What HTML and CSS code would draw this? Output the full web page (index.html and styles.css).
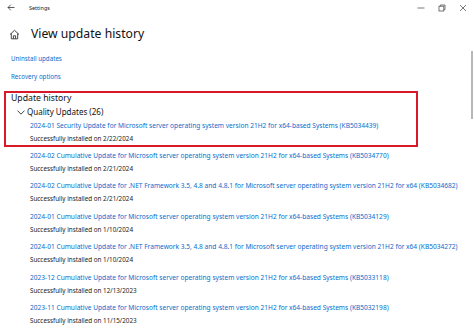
FILE: index.html
```html
<!DOCTYPE html>
<html>
<head>
<meta charset="utf-8">
<link rel="stylesheet" href="styles.css">
</head>
<body>
<div class="window">
  <div class="titlebar">
    <svg class="back" width="8" height="7" viewBox="0 0 8 7"><path d="M7.5 3.5H1M3.8 0.7L1 3.5l2.8 2.8" fill="none" stroke="#333" stroke-width="0.8"/></svg>
    <span class="apptitle">Settings</span>
    <div class="controls">
      <svg width="8" height="8" viewBox="0 0 8 8"><path d="M0.5 4h7" stroke="#555" stroke-width="0.8"/></svg>
      <svg width="8" height="8" viewBox="0 0 8 8"><rect x="1" y="2.2" width="4.8" height="4.8" fill="none" stroke="#555" stroke-width="0.8"/><path d="M2.4 2.2V1h4.6v4.6H5.8" fill="none" stroke="#555" stroke-width="0.8"/></svg>
      <svg width="8" height="8" viewBox="0 0 8 8"><path d="M1 1l6 6M7 1L1 7" stroke="#555" stroke-width="0.8"/></svg>
    </div>
  </div>
  <div class="scrollthumb"></div>
  <div class="header">
    <svg class="home" width="11" height="11" viewBox="0 0 11 11"><path d="M1 5.5L5.5 1.3 10 5.5M2.3 4.4V9.8h6.4V4.4M4.4 9.8V6.8h2.2v3" fill="none" stroke="#333" stroke-width="0.9"/></svg>
    <h1 class="pagetitle">View update history</h1>
  </div>
  <div class="links">
    <a class="toplink">Uninstall updates</a>
    <a class="toplink">Recovery options</a>
  </div>
  <div class="highlight">
    <h2 class="sectiontitle">Update history</h2>
    <div class="group">
      <svg class="chev" width="8" height="5" viewBox="0 0 8 5"><path d="M0.5 0.6L4 4.2 7.5 0.6" fill="none" stroke="#222" stroke-width="0.85"/></svg>
      <span>Quality Updates (26)</span>
    </div>
    <div class="item first">
      <a class="link">2024-01 Security Update for Microsoft server operating system version 21H2 for x64-based Systems (KB5034439)</a>
      <div class="status">Successfully installed on 2/22/2024</div>
    </div>
  </div>
  <div class="items">
    <div class="item">
      <a class="link">2024-02 Cumulative Update for Microsoft server operating system version 21H2 for x64-based Systems (KB5034770)</a>
      <div class="status">Successfully installed on 2/21/2024</div>
    </div>
    <div class="item">
      <a class="link">2024-02 Cumulative Update for .NET Framework 3.5, 4.8 and 4.8.1 for Microsoft server operating system version 21H2 for x64 (KB5034682)</a>
      <div class="status">Successfully installed on 2/21/2024</div>
    </div>
    <div class="item">
      <a class="link">2024-01 Cumulative Update for Microsoft server operating system version 21H2 for x64-based Systems (KB5034129)</a>
      <div class="status">Successfully installed on 1/10/2024</div>
    </div>
    <div class="item">
      <a class="link">2024-01 Cumulative Update for .NET Framework 3.5, 4.8 and 4.8.1 for Microsoft server operating system version 21H2 for x64 (KB5034272)</a>
      <div class="status">Successfully installed on 1/10/2024</div>
    </div>
    <div class="item">
      <a class="link">2023-12 Cumulative Update for Microsoft server operating system version 21H2 for x64-based Systems (KB5033118)</a>
      <div class="status">Successfully installed on 12/13/2023</div>
    </div>
    <div class="item">
      <a class="link">2023-11 Cumulative Update for Microsoft server operating system version 21H2 for x64-based Systems (KB5032198)</a>
      <div class="status">Successfully installed on 11/15/2023</div>
    </div>
  </div>
</div>
</body>
</html>
```
FILE: styles.css
```css
* { box-sizing: border-box; }
html, body { margin: 0; padding: 0; background: #fff; }
body { width: 474px; height: 336px; overflow: hidden; font-family: "Noto Sans", "Open Sans", sans-serif; color: #1a1a1a; }
.window { position: relative; width: 474px; height: 336px; }
.titlebar { display: flex; align-items: center; height: 15px; padding-left: 7px; }
.back { margin-right: 14px; }
.apptitle { font-size: 5.5px; color: #222; }
.controls { margin-left: auto; display: flex; gap: 13px; padding-right: 7px; }
.scrollthumb { position: absolute; right: 1px; top: 51px; width: 2px; height: 68px; background: #b8b8b8; }
.header { display: flex; align-items: center; padding-left: 9px; margin-top: 10px; height: 18px; }
.home { margin-right: 11px; }
.pagetitle { font-size: 12.2px; font-weight: 400; margin: 0; color: #111; line-height: 18px; }
.links { display: flex; flex-direction: column; align-items: flex-start; padding-left: 11px; margin-top: 11px; gap: 9px; }
.toplink { color: #0a6ccc; font-size: 6.2px; line-height: 9px; display: block; }
.link { color: #0a6ccc; font-size: 6.6px; line-height: 9px; display: block; white-space: nowrap; }
.highlight { margin: 10px 56px 0 4px; border: 2px solid #d9192a; padding: 0 0 2.5px 0; }
.sectiontitle { font-size: 8.7px; font-weight: 400; margin: 0; padding-left: 5px; line-height: 11px; color: #111; }
.group { display: flex; align-items: center; margin-top: 2px; padding-left: 11px; font-size: 8px; line-height: 12px; color: #111; }
.chev { margin-right: 2px; }
.item { padding-left: 30px; display: flex; flex-direction: column; gap: 4px; }
.highlight .item { padding-left: 24px; margin-top: 2.5px; }
.items { display: flex; flex-direction: column; gap: 8.5px; margin-top: 3.5px; }
.status { font-size: 6.3px; line-height: 9px; color: #1a1a1a; }
```
